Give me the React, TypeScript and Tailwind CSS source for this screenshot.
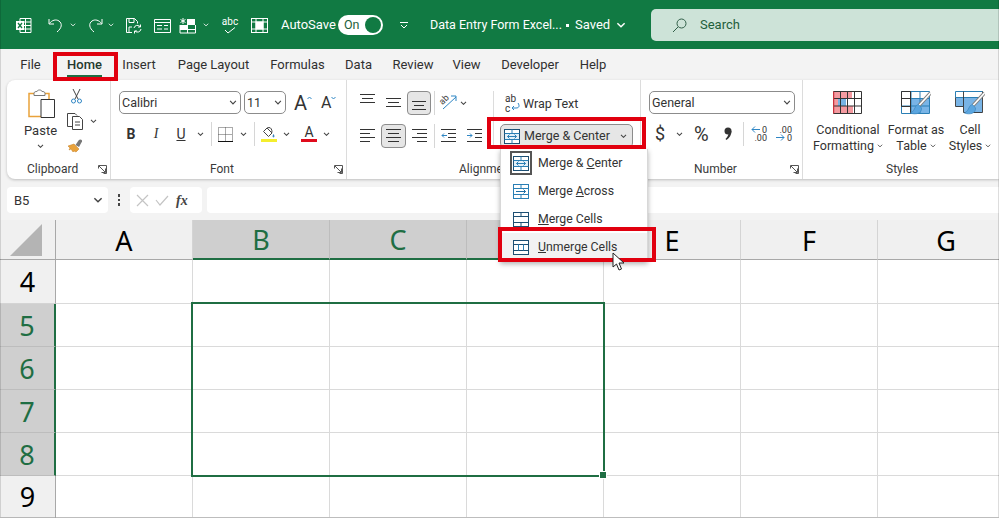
import React from "react";

const BLUE = "#2a7fb5";

function Chev({ className = "", size = 8, color = "#444" }: { className?: string; size?: number; color?: string }) {
  return (
    <svg width={size} height={size * 0.6} viewBox="0 0 8 5" className={className} fill="none" stroke={color} strokeWidth="1.2">
      <path d="M1 1l3 3 3-3" />
    </svg>
  );
}

function Lines({ rows, w = 15, h = 14, className = "" }: { rows: number[][]; w?: number; h?: number; className?: string }) {
  return (
    <svg width={w} height={h} viewBox={`0 0 ${w} ${h}`} className={className} stroke="#333" strokeWidth="1">
      {rows.map((r, i) => (
        <path key={i} d={`M${r[0]} ${r[2] + 0.5}H${r[1]}`} />
      ))}
    </svg>
  );
}

function Launcher({ className = "" }: { className?: string }) {
  return (
    <svg width="9" height="9" viewBox="0 0 9 9" className={className} fill="none" stroke="#555" strokeWidth="1">
      <path d="M.5 3.5V.5h8v8h-3" />
      <path d="M1 1l6 6M3.5 7.5h4v-4" />
    </svg>
  );
}

function Sep({ className = "" }: { className?: string }) {
  return <div className={`w-px h-[24px] bg-[#d6d6d6] shrink-0 ${className}`} />;
}

function TitleIconStroke({ children, w = 17, h = 17, className = "" }: { children: React.ReactNode; w?: number; h?: number; className?: string }) {
  return (
    <svg width={w} height={h} viewBox={`0 0 ${w} ${h}`} className={`shrink-0 ${className}`} fill="none" stroke="#fff" strokeWidth="1">
      {children}
    </svg>
  );
}

function MergeIcon({ kind }: { kind: "center" | "across" | "cells" | "unmerge" }) {
  const outline = kind === "across" ? BLUE : "#1d4f73";
  return (
    <svg width="16" height="15" viewBox="0 0 16 15" fill="none" stroke={outline} strokeWidth="1" className="shrink-0">
      <rect x=".5" y=".5" width="15" height="14" fill="#fff" />
      {kind === "center" && (
        <>
          <rect x="1" y="5" width="14" height="5" fill="#e3f0f9" stroke="none" />
          <path d="M.5 4.500h15M.5 10.500h15M8 .5v4M8 10.500v4" stroke={BLUE} />
          <path d="M3.500 7.500h9M5.500 5.500l-2 2 2 2M10.500 5.500l2 2-2 2" stroke={BLUE} />
        </>
      )}
      {kind === "across" && (
        <>
          <path d="M.5 4.500h15M.5 10.500h15M8 .5v4M8 10.500v4" />
          <path d="M3 7.500h9.500M10.500 5.500l2 2-2 2" stroke="#1d6ea5" />
        </>
      )}
      {kind === "cells" && <path d="M.5 4.500h15M.5 10.500h15M8 .5v4M8 10.500v4" />}
      {kind === "unmerge" && (
        <>
          <path d="M.5 4.500h15M.5 10.500h15" />
          <path d="M5.500 4.500v6M10.500 4.500v6" stroke={BLUE} />
        </>
      )}
    </svg>
  );
}

function PasteIcon() {
  return (
    <svg width="30" height="31" viewBox="0 0 30 31" fill="none">
      <path d="M3 5.500h20v23H3z" stroke="#e9a23b" strokeWidth="1.500" fill="#fff" />
      <path d="M8 5.500c0-2 2-2 3-2 .3-2 4.700-2 5 0 1 0 3 0 3 2v2H8z" fill="#fff" stroke="#777" />
      <path d="M15 11.500h13.500v18H15z" fill="#fff" stroke="#333" />
    </svg>
  );
}

function Brush() {
  return (
    <>
      <path d="M29.500 2L18 14.500" stroke="#808080" strokeWidth="3.400" />
      <path d="M29.500 2L18 14.500" stroke="#fff" strokeWidth="1.600" />
      <path d="M17.500 13.500c-4 .5-3 6-8 8.500 5 2 11.500.5 11-5z" fill="#5aa5df" stroke="#3d86bd" strokeWidth=".7" />
    </>
  );
}

function StyleGrid({ kind }: { kind: "cond" | "table" | "cell" }) {
  const stroke = "#333";
  return (
    <svg width="30" height="24" viewBox="0 0 30 24" fill="none" className="shrink-0">
      {kind === "cond" && (
        <>
          <rect x="1" y="1" width="18" height="7" fill="#f49aa0" />
          <rect x="1" y="8" width="9" height="7" fill="#f49aa0" />
          <rect x="5" y="8" width="8" height="7" fill="#77b3e4" />
          <rect x="1" y="15" width="19" height="7" fill="#f49aa0" />
          <path d="M.5.500h28v22H.5zM.5 7.500h28M.5 15h28M7.500.5v22M14.500.5v22M21.500.5v22" stroke={stroke} />
          <path d="M.5.500v22" stroke="#c8323c" strokeWidth="1.500" />
        </>
      )}
      {kind === "table" && (
        <>
          <rect x="10" y="7" width="18" height="15" fill="#79b4e6" />
          <path d="M.5.500h28v22H.5zM.5 7.500h28M.5 15h28M10 .5v22M19 .5v22" stroke={BLUE} />
          <path d="M.5.500h9v22M.5 .5v15h9M.5 7.500h9" stroke={stroke} />
          <Brush />
        </>
      )}
      {kind === "cell" && (
        <>
          <rect x="1" y="7" width="26" height="9" fill="#79b4e6" />
          <rect x="9" y="7" width="18" height="15" fill="#79b4e6" />
          <path d="M.5.500h27v6H.5z" stroke={BLUE} fill="#fff" />
          <path d="M.5 6.500v9h8v6h19V.5M8.500 .5v15" stroke={stroke} strokeWidth=".9" />
          <Brush />
        </>
      )}
    </svg>
  );
}

const TABS: [string, string, boolean?][] = [
  ["File", "w-[43px]"],
  ["Home", "w-[65px]", true],
  ["Insert", "w-[44px]"],
  ["Page Layout", "w-[105px]"],
  ["Formulas", "w-[63px]"],
  ["Data", "w-[59px]"],
  ["Review", "w-[50px]"],
  ["View", "w-[57px]"],
  ["Developer", "w-[70px]"],
  ["Help", "w-[56px]"],
];

const ROWS = [
  { n: 4, sel: false, h: "h-[44px]" },
  { n: 5, sel: true, h: "h-[43px]" },
  { n: 6, sel: true, h: "h-[43px]" },
  { n: 7, sel: true, h: "h-[43px]" },
  { n: 8, sel: true, h: "h-[43px]" },
  { n: 9, sel: false, h: "h-[42px]" },
];
const COLS = ["A", "B", "C", "D", "E", "F", "G"];

function TitleBar() {
  return (
    <div className="flex items-center h-[49px] bg-[#117a43] text-white shrink-0 pt-[1px]">
      <svg width="17" height="17" viewBox="0 0 17 17" fill="none" stroke="#fff" className="ml-[15px] shrink-0">
        <path d="M5 1.500h11v14H5zM10.500 1.500v14M5 5h11M5 8.500h11M5 12h11" />
        <rect x="1" y="4" width="8" height="9" fill="#fff" stroke="none" />
        <path d="M3 6l4 5M7 6l-4 5" stroke="#117a43" strokeWidth="1.300" />
      </svg>
      <TitleIconStroke w={16} className="ml-[16px]">
        <path d="M1 2v5h5M1.500 6.500C4 3 8 2 11 4c3.500 2.500 3 7-2 11" />
      </TitleIconStroke>
      <Chev color="#fff" size={6} className="ml-[6px]" />
      <TitleIconStroke w={16} className="ml-[11px]">
        <path d="M15 2v5h-5M14.500 6.500C12 3 8 2 5 4c-3.500 2.500-3 7 2 11" />
      </TitleIconStroke>
      <Chev color="#fff" size={6} className="ml-[5px]" />
      <TitleIconStroke className="ml-[11px]">
        <path d="M7 15.500H1.500v-14h8l3 3v2M4 1.500v4h5v-4M4 15v-5h3" />
        <path d="M9 11a3.500 3.500 0 0 1 6-1.500M16 12a3.500 3.500 0 0 1-6 2M15.500 7.500v2.500H13M9.500 16.500V14H12" />
      </TitleIconStroke>
      <TitleIconStroke className="ml-[12px]">
        <path d="M.5 2.500h16v13H.5zM.5 5.500h16M3 8.500h5M10 8.500h4M3 12h5M10 12h4" />
      </TitleIconStroke>
      <svg width="17" height="17" viewBox="0 0 17 17" className="ml-[8px] shrink-0" fill="none" stroke="#fff">
        <rect x="8" y="2" width="8" height="6" fill="#fff" stroke="none" />
        <rect x="1" y="8" width="7" height="4" fill="#fff" stroke="none" />
        <path d="M8.500 8v8M1 12.500h15.500M1 16h15.500M16.500 8v8M1 8v8" />
        <path d="M4 1v6M1.500 2.500l5 3M6.500 2.500l-5 3" />
      </svg>
      <Chev color="#fff" size={6} className="ml-[7px]" />
      <div className="flex flex-col items-center ml-[14px] w-[14px]">
        <span className="text-[10px] leading-[10px]">abc</span>
        <svg width="12" height="7" viewBox="0 0 12 7" fill="none" stroke="#fff">
          <path d="M1 3l3 3 7-5.500" />
        </svg>
      </div>
      <svg width="17" height="15" viewBox="0 0 17 15" className="ml-[14px] shrink-0" fill="none" stroke="#fff">
        <rect x=".5" y=".5" width="16" height="14" />
        <rect x="5" y="4" width="7" height="7" fill="#fff" />
        <path d="M5 .5v14M12 .5v14M.5 4h16M.5 11h16" />
      </svg>
      <span className="ml-[13px] text-[13px] w-[51px] whitespace-nowrap">AutoSave</span>
      <div className="ml-[6px] w-[45px] h-[20px] rounded-full bg-white flex items-center justify-between pl-[6px] pr-[2px]">
        <span className="text-[12.500px] text-[#1f5f3b] leading-none">On</span>
        <div className="w-[16px] h-[16px] rounded-full bg-[#117a43]" />
      </div>
      <svg width="8" height="7" viewBox="0 0 8 7" fill="none" stroke="#fff" className="ml-[17px] shrink-0">
        <path d="M0 .5h8M1 3l3 3 3-3" />
      </svg>
      <span className="ml-[22px] text-[12.500px] whitespace-nowrap w-[130px]">Data Entry Form Excel...</span>
      <div className="w-[3px] h-[3px] bg-white ml-[6px]" />
      <span className="ml-[6px] text-[13px]">Saved</span>
      <Chev color="#fff" size={10} className="ml-[6px]" />
      <div className="ml-auto w-[348px] h-[32px] bg-[#cde3d8] rounded-l-[5px] flex items-center pl-[21px] text-[#1f5f3b]">
        <svg width="15" height="15" viewBox="0 0 15 15" fill="none" stroke="#315f48">
          <circle cx="9.500" cy="5.500" r="4.500" />
          <path d="M6 9l-5 5" />
        </svg>
        <span className="ml-[13px] text-[13px]">Search</span>
      </div>
    </div>
  );
}

function Tabs() {
  return (
    <div className="flex h-[31px] pl-[9px] items-center shrink-0 text-[13px] text-[#303030]">
      {TABS.map(([t, w, active]) => (
        <div key={t} className={`${w} h-full flex items-center justify-center relative whitespace-nowrap`}>
          <span className={active ? "relative font-medium text-[#24392d]" : ""}>
            {t}
            {active && <span className="absolute left-0 right-0 -bottom-[3px] h-[2px] bg-[#1f6e43]" />}
          </span>
        </div>
      ))}
    </div>
  );
}

function GroupFooter({ label, labelClass, launcher = true }: { label: string; labelClass: string; launcher?: boolean }) {
  return (
    <div className="flex items-center h-[18px] mt-auto mb-[1px] text-[12px] text-[#3a3a3a] relative">
      <span className={`${labelClass} whitespace-nowrap`}>{label}</span>
      {launcher && <Launcher className="ml-auto mr-[3px]" />}
    </div>
  );
}

function Clipboard() {
  return (
    <div className="w-[104px] h-full border-r border-[#dcdcdc] flex flex-col shrink-0">
      <div className="flex">
        <div className="w-[58px] flex flex-col items-center pl-[9px] pt-[8px]">
          <PasteIcon />
          <span className="text-[13px] leading-[18px] text-[#333] mt-[3px]">Paste</span>
          <Chev size={7} className="mt-[4px]" />
        </div>
        <div className="flex flex-col pt-[8px] pl-[2px]">
          <svg width="13" height="16" viewBox="0 0 13 16" fill="none" stroke="#444" className="ml-[3px]">
            <path d="M3 1l5 10M10 1L5 11" />
            <circle cx="3.500" cy="13" r="2" stroke="#2f86c4" />
            <circle cx="9.500" cy="13" r="2" stroke="#2f86c4" />
          </svg>
          <div className="flex items-center mt-[9px]">
            <svg width="17" height="17" viewBox="0 0 17 17" fill="none" stroke="#444">
              <path d="M5 13.500H.5V.5H8l2 2" />
              <path d="M5.500 3.500h7l3 3v10h-10zM8 9h5M8 12h5" />
            </svg>
            <Chev size={7} className="ml-[6px]" />
          </div>
          <svg width="17" height="15" viewBox="0 0 17 15" className="mt-[8px]">
            <path d="M1 8l6-2 5 5-3 3-2-1-1 1-2-3-2 1 1-2z" fill="#e9a23b" stroke="#c27a1c" strokeWidth=".5" />
            <path d="M8.500 7l3-4.500c1.500-2 4-1 3.500 1L12 9z" fill="#777" />
          </svg>
        </div>
      </div>
      <GroupFooter label="Clipboard" labelClass="ml-[20px]" />
    </div>
  );
}

function Select({ text, w }: { text: string; w: string }) {
  return (
    <div className={`${w} h-[23px] rounded-[5px] border border-[#8c8c8c] flex items-center pl-[2px] pr-[3px] text-[12.500px] text-[#333] justify-between shrink-0`}>
      <span className="pt-[1px]">{text}</span>
      <Chev size={8} />
    </div>
  );
}

function Font() {
  return (
    <div className="w-[236px] h-full border-r border-[#dcdcdc] flex flex-col shrink-0">
      <div className="flex items-center pl-[8px] pt-[11px]">
        <Select text="Calibri" w="w-[122px]" />
        <div className="w-[3px]" />
        <Select text="11" w="w-[42px]" />
        <div className="ml-[8px] w-[27px] flex items-start text-[#333]">
          <span className="text-[20px] leading-[20px]">A</span>
          <svg width="5" height="4" viewBox="0 0 5 4" fill="none" stroke="#2f86c4" className="mt-[3px]">
            <path d="M.5 3l2-2 2 2" />
          </svg>
        </div>
        <div className="flex items-start text-[#333]">
          <span className="text-[16px] leading-[20px]">A</span>
          <svg width="5" height="4" viewBox="0 0 5 4" fill="none" stroke="#2f86c4" className="mt-[3px]">
            <path d="M.5 1l2 2 2-2" />
          </svg>
        </div>
      </div>
      <div className="flex items-center pl-[8px] mt-[8px] h-[24px] text-[#333]">
        <span className="w-[24px] text-center font-bold text-[14px] leading-none">B</span>
        <span className="w-[26px] text-center italic text-[14px] leading-none font-['Liberation_Serif',serif]">I</span>
        <span className="w-[24px] text-center underline text-[14px] leading-none">U</span>
        <Chev size={7} className="ml-[4px]" />
        <Sep className="ml-[7px]" />
        <svg width="15" height="15" viewBox="0 0 15 15" fill="none" stroke="#555" className="ml-[6px]" strokeDasharray="1 1">
          <path d="M.5.500h14v14H.5zM.5 7.500h14M7.500.5v14" />
          <path d="M0 14.500h15" stroke="#111" strokeDasharray="none" />
        </svg>
        <Chev size={7} className="ml-[7px]" />
        <Sep className="ml-[7px]" />
        <div className="ml-[6px] flex flex-col items-center w-[16px]">
          <svg width="14" height="11" viewBox="0 0 14 11" fill="none" stroke="#444">
            <path d="M5 1l5 5-3.500 3.500-5-5z" fill="#fff" />
            <path d="M5 1L7 .5c2 0 3 2 3 5" />
            <path d="M11.500 7c1 1.500 1.500 3 0 3.500-1.500-.5-1-2 0-3.500z" fill="#3d86bd" stroke="none" />
          </svg>
          <div className="w-[16px] h-[3px] bg-[#f4ee2e] mt-[1px]" />
        </div>
        <Chev size={7} className="ml-[6px]" />
        <div className="ml-[11px] flex flex-col items-center w-[16px]">
          <span className="text-[14px] leading-[12px] text-[#333]">A</span>
          <div className="w-[16px] h-[3px] bg-[#e00b1c] mt-[1px]" />
        </div>
        <Chev size={7} className="ml-[6px]" />
      </div>
      <GroupFooter label="Font" labelClass="ml-[99px]" />
    </div>
  );
}

function Alignment() {
  return (
    <div className="w-[294px] h-full border-r border-[#dcdcdc] flex flex-col shrink-0">
      <div className="flex pt-[11px] h-[35px]">
        <div className="flex items-start pl-[13px] w-[146px]">
          <Lines w={15} h={10} className="mt-[3px]" rows={[[0, 15, 0], [2, 13, 4], [0, 15, 8]]} />
          <Lines w={15} h={10} className="ml-[11px] mt-[7px]" rows={[[0, 15, 0], [2, 13, 4], [0, 15, 8]]} />
          <div className="ml-[6px] w-[24px] h-[24px] rounded-[4px] bg-[#e6e6e6] border border-[#8c8c8c] flex items-center justify-center shrink-0">
            <Lines w={14} h={10} className="mt-[6px]" rows={[[0, 14, 0], [2, 12, 4], [0, 14, 8]]} />
          </div>
          <Sep className="ml-[3px]" />
          <svg width="17" height="17" viewBox="0 0 17 17" fill="none" stroke="#444" className="ml-[5px] mt-[2px] shrink-0 overflow-visible">
            <text x="0" y="10" fontSize="9" transform="rotate(-45 4 8)" fill="#444" stroke="none">ab</text>
            <path d="M3 16L16 4M11 3h5v5" stroke="#2f86c4" />
          </svg>
          <Chev size={7} className="ml-[3px] mt-[10px]" />
        </div>
        <div className="w-[1px] h-[54px] bg-[#dcdcdc]" />
        <div className="flex items-center pl-[11px] h-[26px] text-[12.500px] text-[#333]">
          <div className="flex flex-col w-[15px] text-[10px] leading-[10px] relative h-[20px] text-[#333]">
            <span>ab</span>
            <span>c</span>
            <svg width="9" height="9" viewBox="0 0 9 9" fill="none" stroke="#2f86c4" className="absolute left-[6px] top-[9px]">
              <path d="M7 0c2 3 1 5-2 5H1M3 3L1 5l2 2" />
            </svg>
          </div>
          <span className="ml-[3px] whitespace-nowrap">Wrap Text</span>
        </div>
      </div>
      <div className="flex items-center mt-[9px] h-[24px]">
        <Lines w={15} h={14} className="ml-[13px]" rows={[[0, 15, 0], [0, 10, 4], [0, 15, 8], [0, 10, 12]]} />
        <div className="ml-[6px] w-[25px] h-[24px] rounded-[4px] bg-[#e6e6e6] border border-[#8c8c8c] flex items-center justify-center shrink-0">
          <Lines w={15} h={14} rows={[[0, 15, 0], [2, 13, 4], [0, 15, 8], [2, 13, 12]]} />
        </div>
        <Lines w={15} h={14} className="ml-[6px]" rows={[[0, 15, 0], [5, 15, 4], [0, 15, 8], [5, 15, 12]]} />
        <Sep className="ml-[7px]" />
        <svg width="15" height="14" viewBox="0 0 15 14" fill="none" stroke="#333" className="ml-[6px] shrink-0">
          <path d="M0 .5h15M7 4.500h8M7 8.500h8M0 12.500h15" />
          <path d="M6 6.500H1M3 4.500l-2 2 2 2" stroke="#2f86c4" />
        </svg>
        <svg width="15" height="14" viewBox="0 0 15 14" fill="none" stroke="#333" className="ml-[11px] shrink-0">
          <path d="M0 .5h15M8 4.500h7M8 8.500h7M0 12.500h15" />
          <path d="M0 6.500h5M3 4.500l2 2-2 2" stroke="#2f86c4" />
        </svg>
        <div className="ml-[18px] w-[133px] h-[24px] rounded-[5px] border border-[#8c8c8c] bg-[#e6e6e6] flex items-center pl-[3px] pr-[5px] text-[12.500px] text-[#333] shrink-0">
          <MergeIcon kind="center" />
          <span className="ml-[4px] whitespace-nowrap">Merge &amp; Center</span>
          <Chev size={7} className="ml-auto" />
        </div>
      </div>
      <GroupFooter label="Alignment" labelClass="ml-[112px]" />
    </div>
  );
}

function NumberGroup() {
  return (
    <div className="w-[162px] h-full border-r border-[#dcdcdc] flex flex-col shrink-0">
      <div className="pl-[8px] pt-[11px]">
        <Select text="General" w="w-[146px]" />
      </div>
      <div className="flex items-center mt-[8px] h-[24px] text-[#333]">
        <span className="ml-[14px] text-[18px] leading-none w-[11px]">$</span>
        <Chev size={7} className="ml-[10px]" />
        <span className="ml-[11px] text-[20px] leading-none w-[20px]">%</span>
        <svg width="8" height="14" viewBox="0 0 8 14" className="ml-[10px] mr-[2px] shrink-0">
          <circle cx="4" cy="4" r="3.500" fill="#333" />
          <path d="M7.500 4c0 4-2 7-5 9l-1-1c2-2 3-4 3-6z" fill="#333" />
        </svg>
        <Sep className="ml-[9px]" />
        <div className="ml-[7px] w-[16px] text-[9px] leading-[8px] text-right relative">
          0<br />.00
          <svg width="9" height="7" viewBox="0 0 9 7" fill="none" stroke="#2f86c4" className="absolute left-0 top-0">
            <path d="M9 3.500H1M4 .5l-3 3 3 3" />
          </svg>
        </div>
        <div className="ml-[9px] w-[16px] text-[9px] leading-[8px] text-right relative">
          .00<br />0
          <svg width="9" height="7" viewBox="0 0 9 7" fill="none" stroke="#2f86c4" className="absolute left-0 top-[8px]">
            <path d="M0 3.500h8M5 .5l3 3-3 3" />
          </svg>
        </div>
      </div>
      <GroupFooter label="Number" labelClass="ml-[53px]" />
    </div>
  );
}

function StyleBtn({ kind, l1, l2, w }: { kind: "cond" | "table" | "cell"; l1: string; l2: string; w: string }) {
  return (
    <div className={`${w} flex flex-col items-center shrink-0`}>
      <StyleGrid kind={kind} />
      <span className="text-[12.500px] leading-[16px] mt-[7px] whitespace-nowrap text-[#333]">{l1}</span>
      <span className="text-[12.500px] leading-[16px] whitespace-nowrap flex items-center text-[#333]">
        {l2}
        <Chev size={6} className="ml-[3px]" />
      </span>
    </div>
  );
}

function Styles() {
  return (
    <div className="flex-1 h-full flex flex-col">
      <div className="flex pt-[11px] pl-[8px]">
        <StyleBtn kind="cond" l1="Conditional" l2="Formatting" w="w-[74px]" />
        <StyleBtn kind="table" l1="Format as" l2="Table" w="w-[62px]" />
        <StyleBtn kind="cell" l1="Cell" l2="Styles" w="w-[46px]" />
      </div>
      <GroupFooter label="Styles" labelClass="ml-[83px]" launcher={false} />
    </div>
  );
}

function FormulaBar() {
  return (
    <div className="flex items-center h-[26px] mt-[8px] pl-[7px] shrink-0">
      <div className="w-[101px] h-full bg-white rounded-[4px] flex items-center pl-[7px] pr-[5px] justify-between text-[13px] text-[#333]">
        <span className="pt-[1px]">B5</span>
        <Chev size={10} />
      </div>
      <div className="w-[22px] flex flex-col items-center gap-[2px]">
        <div className="w-[2.500px] h-[2.500px] bg-[#444]" />
        <div className="w-[2.500px] h-[2.500px] bg-[#444]" />
        <div className="w-[2.500px] h-[2.500px] bg-[#444]" />
      </div>
      <div className="w-[72px] h-full bg-white rounded-[4px] flex items-center pl-[6px]">
        <svg width="13" height="13" viewBox="0 0 13 13" stroke="#c4c4c4" strokeWidth="1.200" fill="none">
          <path d="M1 1l11 11M12 1L1 12" />
        </svg>
        <svg width="14" height="11" viewBox="0 0 14 11" stroke="#c4c4c4" strokeWidth="1.200" fill="none" className="ml-[6px]">
          <path d="M1 5l4 5 8-9" />
        </svg>
        <span className="ml-[7px] italic font-bold text-[14px] font-['Liberation_Serif',serif] text-[#444]">fx</span>
      </div>
      <div className="ml-[5px] flex-1 h-full bg-white rounded-l-[4px]" />
    </div>
  );
}

function Sheet() {
  return (
    <div className="relative mt-[7px] flex-1 bg-white font-['Noto_Sans',sans-serif]">
      <div className="grid grid-cols-[56px_137px_137px_137px_137px_137px_137px_137px]">
        <div className="h-[40px] bg-[#f0f0f0] border-r border-b border-[#a8a8a8] flex items-center justify-center">
          <svg width="33" height="33" viewBox="0 0 33 33" className="mr-[3px]">
            <path d="M32 1v32H0z" fill="#b4b4b4" />
          </svg>
        </div>
        {COLS.map((c) => {
          const sel = c === "B" || c === "C" || c === "D";
          return (
            <div
              key={c}
              className={
                sel
                  ? "h-[40px] pt-[3px] bg-[#cfcfcf] border-r border-[#bdbdbd] border-b-[2px] border-b-[#1f6e43] flex items-center justify-center text-[27px] text-[#1f6e43]"
                  : "h-[40px] pt-[3px] bg-[#f0f0f0] border-r border-[#d4d4d4] border-b border-b-[#a8a8a8] flex items-center justify-center text-[27px] text-black"
              }
            >
              {c}
            </div>
          );
        })}
        {ROWS.map((r) => (
          <React.Fragment key={r.n}>
            <div
              className={
                r.sel
                  ? `${r.h} pt-[2px] bg-[#cfcfcf] border-b border-[#bdbdbd] border-r-[2px] border-r-[#1f6e43] flex items-center justify-center text-[27px] text-[#1f6e43]`
                  : `${r.h} pt-[2px] bg-[#f0f0f0] border-b border-[#d4d4d4] border-r border-r-[#a8a8a8] flex items-center justify-center text-[27px] text-black`
              }
            >
              {r.n}
            </div>
            {COLS.map((c) => (
              <div key={c} className={`${r.h} border-r border-b border-[#dadada]`} />
            ))}
          </React.Fragment>
        ))}
      </div>
      <div className="absolute left-[191px] top-[82px] w-[414px] h-[175px] border-2 border-[#1f6e43]">
        <div className="absolute -right-[4px] -bottom-[4px] w-[6px] h-[6px] bg-[#1f6e43] border border-white box-content" />
      </div>
    </div>
  );
}

function MenuItem({ kind, pre, u, post, hover, box }: { kind: "center" | "across" | "cells" | "unmerge"; pre: string; u: string; post: string; hover?: boolean; box?: boolean }) {
  return (
    <div className={`flex items-center h-[28px] pl-[11px] ${hover ? "bg-[#f2f2f2]" : ""}`}>
      <div className={`w-[18px] h-[20px] flex items-center justify-center shrink-0 ${box ? "outline outline-2 outline-[#555]" : ""}`}>
        <MergeIcon kind={kind} />
      </div>
      <span className="ml-[8px] text-[12.300px] text-[#333] whitespace-nowrap">
        {pre}
        <span className="underline">{u}</span>
        {post}
      </span>
    </div>
  );
}

export default function App() {
  return (
    <div className="relative w-[999px] h-[518px] overflow-hidden bg-[#f3f3f3] flex flex-col font-['Roboto',sans-serif]">
      <TitleBar />
      <Tabs />
      <div className="ml-[7px] h-[99px] bg-white rounded-l-[8px] shadow-[0_1px_3px_rgba(0,0,0,0.22)] flex shrink-0">
        <Clipboard />
        <Font />
        <Alignment />
        <NumberGroup />
        <Styles />
      </div>
      <FormulaBar />
      <Sheet />

      <div className="absolute left-[53px] top-[52px] w-[65px] h-[29px] border-[4px] border-[#e1000f]" />
      <div className="absolute left-[500px] top-[149px] w-[148px] h-[113px] bg-white shadow-[0_2px_5px_rgba(0,0,0,0.3)] border-x border-b border-[#d8d8d8]">
        <MenuItem kind="center" pre="Merge & " u="C" post="enter" box />
        <MenuItem kind="across" pre="Merge " u="A" post="cross" />
        <MenuItem kind="cells" pre="" u="M" post="erge Cells" />
        <MenuItem kind="unmerge" pre="" u="U" post="nmerge Cells" hover />
      </div>
      <div className="absolute left-[487px] top-[117px] w-[159px] h-[32px] border-[4px] border-[#e1000f]" />
      <div className="absolute left-[498px] top-[227px] w-[158px] h-[35px] border-[4px] border-[#e1000f]" />
      <svg width="14" height="20" viewBox="0 0 14 20" className="absolute left-[612px] top-[252px]">
        <path d="M1 1v14l3.500-3 2.500 6 2.500-1-2.500-6h5z" fill="#fff" stroke="#222" strokeWidth="1" />
      </svg>
      <div className="absolute inset-0 border-x border-b border-[#00000022] pointer-events-none" />
    </div>
  );
}
